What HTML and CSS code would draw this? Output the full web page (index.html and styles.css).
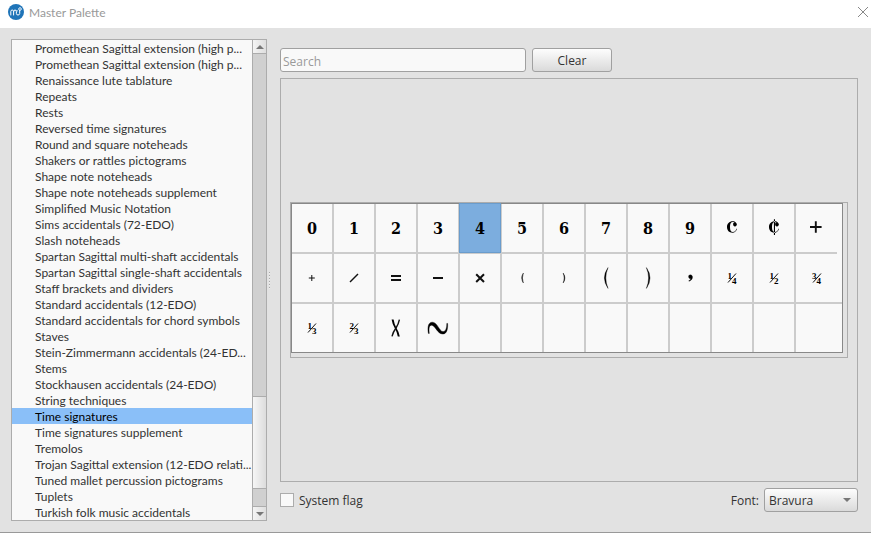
FILE: index.html
```
<!DOCTYPE html>
<html lang="en">
<head>
<meta charset="utf-8">
<title>Master Palette</title>
<link rel="stylesheet" href="styles.css">
</head>
<body>
<header class="titlebar">
  <svg class="logo" viewBox="0 0 16 16" aria-hidden="true">
    <circle cx="8" cy="8" r="8" fill="#1f74b8"/>
    <path d="M2.8 11V7.6Q2.9 6 4.2 6T5.6 7.6V11M5.6 7.6Q5.7 6 7 6T8.4 7.6V9.6Q8.5 11 10 11T11.7 9.6V6.4M8.6 6.6Q9.2 6 9.6 6.8" fill="none" stroke="#fff" stroke-width="1" stroke-linecap="round"/>
    <circle cx="12" cy="5" r="1.3" fill="none" stroke="#fff" stroke-width=".9"/>
  </svg>
  <h1 class="title">Master Palette</h1>
  <button class="close" aria-label="Close"><svg viewBox="0 0 10 10"><path d="M0 0 10 10M10 0 0 10" stroke="#888" fill="none"/></svg></button>
</header>
<main class="window">
  <section class="listbox">
    <ul class="items" role="listbox" aria-label="Palettes">
      <li role="option">Promethean Sagittal extension (high p...</li>
      <li role="option">Promethean Sagittal extension (high p...</li>
      <li role="option">Renaissance lute tablature</li>
      <li role="option">Repeats</li>
      <li role="option">Rests</li>
      <li role="option">Reversed time signatures</li>
      <li role="option">Round and square noteheads</li>
      <li role="option">Shakers or rattles pictograms</li>
      <li role="option">Shape note noteheads</li>
      <li role="option">Shape note noteheads supplement</li>
      <li role="option">Simplified Music Notation</li>
      <li role="option">Sims accidentals (72-EDO)</li>
      <li role="option">Slash noteheads</li>
      <li role="option">Spartan Sagittal multi-shaft accidentals</li>
      <li role="option">Spartan Sagittal single-shaft accidentals</li>
      <li role="option">Staff brackets and dividers</li>
      <li role="option">Standard accidentals (12-EDO)</li>
      <li role="option">Standard accidentals for chord symbols</li>
      <li role="option">Staves</li>
      <li role="option">Stein-Zimmermann accidentals (24-ED...</li>
      <li role="option">Stems</li>
      <li role="option">Stockhausen accidentals (24-EDO)</li>
      <li role="option">String techniques</li>
      <li role="option" class="selected" aria-selected="true">Time signatures</li>
      <li role="option">Time signatures supplement</li>
      <li role="option">Tremolos</li>
      <li role="option">Trojan Sagittal extension (12-EDO relati...</li>
      <li role="option">Tuned mallet percussion pictograms</li>
      <li role="option">Tuplets</li>
      <li role="option">Turkish folk music accidentals</li>
    </ul>
    <div class="scrollbar">
      <button class="step up" aria-label="Scroll up"><svg viewBox="0 0 8 4"><path d="M0 4 4 0 8 4Z"/></svg></button>
      <div class="track"><div class="thumb"></div></div>
      <button class="step down" aria-label="Scroll down"><svg viewBox="0 0 8 4"><path d="M0 0H8L4 4Z"/></svg></button>
    </div>
  </section>
  <div class="splitter"><span class="grip"></span></div>
  <section class="content">
    <div class="searchrow">
      <input class="search" type="text" placeholder="Search" aria-label="Search">
      <button class="clear">Clear</button>
    </div>
    <div class="panel">
      <div class="frame">
        <div class="grid">
          <button class="cell">0</button>
          <button class="cell">1</button>
          <button class="cell">2</button>
          <button class="cell">3</button>
          <button class="cell current">4</button>
          <button class="cell">5</button>
          <button class="cell">6</button>
          <button class="cell">7</button>
          <button class="cell">8</button>
          <button class="cell">9</button>
          <button class="cell" aria-label="Common time"><svg viewBox="0 0 40 48"><path d="M24.6 20.5C23.6 18.8 22.4 18.3 20.8 18.3C17.2 18.3 15 20.8 15 24.1C15 27.5 17.1 29.8 20.4 29.8C22.8 29.8 24.6 28.1 25 25.8H24.4C23.8 28 22.5 29.1 20.9 29.1C18.8 29.1 18 27.4 18 24.1C18 20.7 18.8 19 20.8 19C21.6 19 22.2 19.2 22.6 19.6A1.9 1.9 0 1 0 24.6 20.5Z"/></svg></button>
          <button class="cell" aria-label="Cut time"><svg viewBox="0 0 40 48"><path d="M24.6 20.5C23.6 18.8 22.4 18.3 20.8 18.3C17.2 18.3 15 20.8 15 24.1C15 27.5 17.1 29.8 20.4 29.8C22.8 29.8 24.6 28.1 25 25.8H24.4C23.8 28 22.5 29.1 20.9 29.1C18.8 29.1 18 27.4 18 24.1C18 20.7 18.8 19 20.8 19C21.6 19 22.2 19.2 22.6 19.6A1.9 1.9 0 1 0 24.6 20.5ZM19.9 16.2H21V32H19.9Z"/></svg></button>
          <button class="cell" aria-label="Plus"><svg viewBox="0 0 40 48"><path class="pen bold" d="M13 24H24.6M18.8 18.2V29.8"/></svg></button>
          <span></span>
          <button class="cell" aria-label="Small plus"><svg viewBox="0 0 40 48"><path class="pen" d="M16.8 24H22.8M19.8 21V27"/></svg></button>
          <button class="cell" aria-label="Slash"><svg viewBox="0 0 40 48"><path class="pen slash" d="M16 28 24 20"/></svg></button>
          <button class="cell" aria-label="Equals"><svg viewBox="0 0 40 48"><path class="pen heavy" d="M15 22H25M15 26H25"/></svg></button>
          <button class="cell" aria-label="Minus"><svg viewBox="0 0 40 48"><path class="pen heavy" d="M15 24H25"/></svg></button>
          <button class="cell" aria-label="Multiply"><svg viewBox="0 0 40 48"><path class="pen heavy" d="M16.2 20.2 24 28M24 20.2 16.2 28"/></svg></button>
          <button class="cell" aria-label="Small left parenthesis"><svg viewBox="0 0 40 48"><path d="M21.4 19Q18 24 21.4 29Q19.4 24 21.4 19Z" stroke="#000" stroke-width=".4"/></svg></button>
          <button class="cell" aria-label="Small right parenthesis"><svg viewBox="0 0 40 48"><path d="M19.2 19Q22.6 24 19.2 29Q21.2 24 19.2 19Z" stroke="#000" stroke-width=".4"/></svg></button>
          <button class="cell" aria-label="Left parenthesis"><svg viewBox="0 0 40 48"><path d="M22 13.6Q14.8 24 22 34.4Q17.6 24 22 13.6Z" stroke="#000" stroke-width=".4"/></svg></button>
          <button class="cell" aria-label="Right parenthesis"><svg viewBox="0 0 40 48"><path d="M18.4 13.6Q25.6 24 18.4 34.4Q22.8 24 18.4 13.6Z" stroke="#000" stroke-width=".4"/></svg></button>
          <button class="cell" aria-label="Comma"><svg viewBox="0 0 40 48"><path d="M20.1 20.8C21.8 20.8 22.6 22 22.5 23.4C22.3 25.5 20.6 26.8 19 27.3L18.7 26.8C20.1 26.1 20.6 25.4 20.8 24.6A1.9 1.9 0 1 1 20.1 20.8Z" stroke="#000" stroke-width=".3"/></svg></button>
          <button class="cell fraction"><span class="num">1</span><span class="den">4</span><svg class="bar" viewBox="0 0 10 10"><path class="pen" d="M1 9.5 9 .5"/></svg></button>
          <button class="cell fraction"><span class="num">1</span><span class="den">2</span><svg class="bar" viewBox="0 0 10 10"><path class="pen" d="M1 9.5 9 .5"/></svg></button>
          <button class="cell fraction"><span class="num">3</span><span class="den">4</span><svg class="bar" viewBox="0 0 10 10"><path class="pen" d="M1 9.5 9 .5"/></svg></button>
          <span class="edge-bottom"></span>
          <button class="cell fraction"><span class="num">1</span><span class="den">3</span><svg class="bar" viewBox="0 0 10 10"><path class="pen" d="M1 9.5 9 .5"/></svg></button>
          <button class="cell fraction"><span class="num">2</span><span class="den">3</span><svg class="bar" viewBox="0 0 10 10"><path class="pen" d="M1 9.5 9 .5"/></svg></button>
          <button class="cell" aria-label="Open time signature"><svg viewBox="0 0 40 48"><path d="M15.6 15.6H17.6Q18.4 20.8 20.6 24.2Q23 28 23.8 32.4H21.8Q21 28 18.8 24.2Q16.4 20.8 15.6 15.6Z"/><path class="pen slash" d="M23.4 15.6Q22.4 20.4 20 24Q17 28 16 32.4"/></svg></button>
          <button class="cell" aria-label="Penderecki time signature"><svg viewBox="0 0 40 48"><path d="M10.4 29.4C9.6 24.5 9.6 18.4 14.2 18.2C19.6 18 21 27.4 25 27.6C27.8 27.6 28.8 24 28.8 19.4H29.6C30 25 28.8 30 24.8 30C19.2 30 17.2 21.2 13.7 21.2C10.8 21.2 10.8 25 11.3 29.4Z" stroke="#000" stroke-width=".4"/></svg></button>
          <button class="cell" aria-label="Empty"></button>
          <button class="cell" aria-label="Empty"></button>
          <button class="cell" aria-label="Empty"></button>
          <button class="cell" aria-label="Empty"></button>
          <button class="cell" aria-label="Empty"></button>
          <button class="cell" aria-label="Empty"></button>
          <button class="cell" aria-label="Empty"></button>
          <button class="cell" aria-label="Empty"></button>
          <button class="cell" aria-label="Empty"></button>
          <span class="edge-top"></span>
        </div>
      </div>
    </div>
    <footer class="options">
      <input class="check" type="checkbox" id="flag">
      <label for="flag">System flag</label>
      <label class="fontlabel" for="font">Font:</label>
      <div class="combo">
        <select id="font"><option>Bravura</option></select>
        <svg class="arrow" viewBox="0 0 8 4"><path d="M0 0H8L4 4Z"/></svg>
      </div>
    </footer>
  </section>
</main>
</body>
</html>
```
FILE: styles.css
```
* { box-sizing: border-box; }
body {
  margin: 0;
  min-height: 100vh;
  display: flex;
  flex-direction: column;
  background: #e2e2e2;
  border-bottom: 1px solid #999;
  color: #333;
  font: 12px/16px "Open Sans", "Noto Sans", sans-serif;
}
button, input, select { font: inherit; color: inherit; margin: 0; }
button { padding: 0; }

.titlebar {
  display: flex;
  align-items: center;
  height: 28px;
  padding: 0 3px 4px 8px;
  background: #fff;
}
.logo { width: 16px; height: 16px; }
.title { margin: 0 auto 0 5px; padding-top: 2px; font-family: Lato, sans-serif; font-size: 12px; font-weight: 400; color: #999; }
.close { width: 10px; height: 10px; border: 0; background: none; }
.close svg { display: block; overflow: visible; }

.window { flex: 1; display: flex; padding: 11px 13px 11px 11px; }

.listbox { display: flex; width: 256px; border: 1px solid #acacac; background: #f9f9f9; }
.items { flex: 1; min-width: 0; margin: 0; padding: 0; list-style: none; font-family: Lato, sans-serif; }
.items li { height: 16px; padding-left: 23px; line-height: 18px; white-space: nowrap; }
.items .selected { background: #8abff8; color: #000; }

.scrollbar { display: flex; flex-direction: column; width: 14px; border-left: 1px solid #acacac; background: #d0d0d0; }
.step { display: grid; place-items: center; height: 14px; border: 0; background: linear-gradient(90deg, #f4f4f4, #dedede); }
.step svg, .arrow { width: 8px; height: 4px; fill: #777; }
.up { border-bottom: 1px solid #acacac; }
.down { border-top: 1px solid #acacac; }
.track { flex: 1; display: flex; flex-direction: column; justify-content: flex-end; padding-bottom: 17px; }
.thumb { height: 93px; border: 1px solid #acacac; border-width: 1px 0; background: linear-gradient(90deg, #f6f6f6, #dcdcdc); }

.splitter { display: flex; align-items: center; width: 13px; padding-left: 2px; }
.grip { width: 1px; height: 17px; background: repeating-linear-gradient(#aaa 0 1px, #eee 1px 2px, transparent 2px 3px); }

.content { flex: 1; min-width: 0; display: flex; flex-direction: column; gap: 6px; padding: 9px 0; }
.searchrow { display: flex; gap: 6px; }
.search, .clear, .combo select { height: 24px; border: 1px solid #a0a0a0; border-radius: 3px; }
.search { width: 246px; padding: 2px 2px 0; background: #f9f9f9; }
.search::placeholder { color: #9a9a9a; }
.clear { width: 80px; padding-top: 2px; }
.clear, .combo select { background: linear-gradient(#fdfdfd, #dadada); }

.panel { flex: 1; display: flex; align-items: center; padding: 0 9px; border: 1px solid #acacac; }
.frame { flex: 1; padding-bottom: 4px; border: 1px solid #acacac; }
.grid {
  display: grid;
  grid-template-columns: 41px repeat(12, 42px) 5px;
  grid-template-rows: 49px 50px 49px;
  width: max-content;
  border: 1px solid #888;
  background: #f9f9f9;
}
.cell {
  display: grid;
  place-items: center;
  padding: 0;
  border: 1px solid #ccc;
  background: none;
  color: #000;
  font: bold 16px/20px "DejaVu Serif Condensed", "DejaVu Serif", serif;
}
.cell svg { width: 40px; height: 48px; }
.cell:nth-child(-n+14) { border-top: 0; padding-top: 2px; }
.cell:nth-child(-n+14) svg { margin-top: -4px; }
.cell:nth-child(n+29) { border-bottom: 0; }
.cell:nth-child(14n+1) { border-left: 0; }
.cell:nth-child(14n+13) { border-right: 0; }
.cell.current { margin-top: -1px; border: 1px solid #6a9ccc; background: #7cadde; }
.cell.fraction {
  position: relative;
  display: flex;
  align-items: center;
  justify-content: center;
  font: bold 9px/10px "Liberation Serif", serif;
}
.num { padding-bottom: 5px; }
.den { padding-top: 6px; }
.cell .bar { position: absolute; inset: 0; margin: auto; width: 10px; height: 10px; }
.pen { fill: none; stroke: #111; stroke-width: 1; }
.pen.slash { stroke-width: 1.4; }
.pen.bold { stroke-width: 1.9; }
.pen.heavy { stroke-width: 2; }
.edge-bottom { border-bottom: 1px solid #ccc; }
.edge-top { border-top: 1px solid #ccc; }

.options { display: flex; align-items: center; gap: 5px; height: 24px; }
.options label { padding-top: 2px; }
.check { appearance: none; width: 14px; height: 14px; border: 1px solid #acacac; background: #f9f9f9; }
.fontlabel { margin-left: auto; }
.combo { position: relative; width: 94px; }
.combo select { display: block; width: 100%; padding: 2px 4px 0; appearance: none; }
.arrow { position: absolute; right: 7px; top: 10px; pointer-events: none; }
```
